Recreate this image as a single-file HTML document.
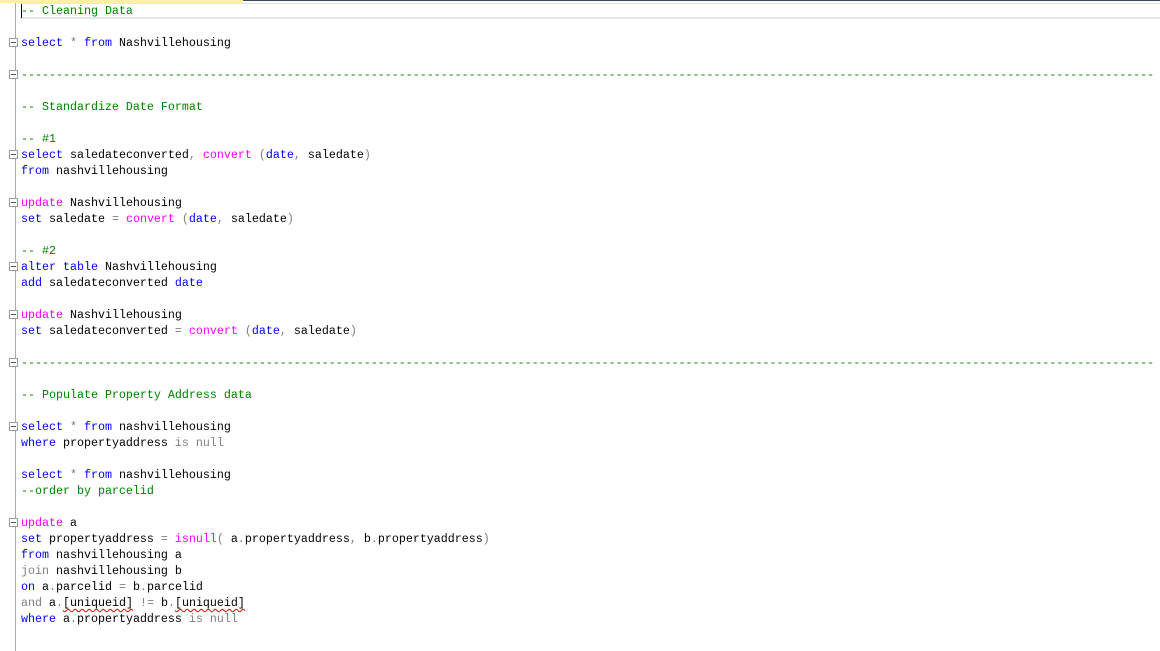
<!DOCTYPE html>
<html><head><meta charset="utf-8"><style>
body{margin:0;width:1160px;height:651px;background:#fff;overflow:hidden;position:relative;font-family:"Liberation Mono",monospace;font-size:11.67px}
.l{position:absolute;left:21px;height:16px;line-height:16px;white-space:pre;color:#000}
.c{color:#008000}.k{color:#0000ff}.p{color:#ff00ff}.g{color:#808080}
.sq{text-decoration:underline wavy #e00;text-decoration-thickness:1px;text-underline-offset:2px}
.box{position:absolute;left:9px;width:7px;height:7px;border:1px solid #999;background:#fff}
.box:after{content:"";position:absolute;left:1px;top:3px;width:5px;height:1px;background:#555}
</style></head><body>
<div style="position:absolute;left:0;top:0;width:243px;height:3px;background:#fff0a0"></div>
<div style="position:absolute;left:243px;top:0;width:917px;height:1px;background:#3a4a60"></div>
<div style="position:absolute;left:20px;top:3px;width:1140px;height:13px;border-bottom:2px solid #e6e6ee;border-top:1px solid #e6e6ee"></div>
<div style="position:absolute;left:21px;top:4px;width:1px;height:14px;background:#000"></div>
<div style="position:absolute;left:15px;top:3px;width:1px;height:648px;background:#aaa"></div>
<div class="box" style="top:38px"></div>
<div class="box" style="top:70px"></div>
<div class="box" style="top:150px"></div>
<div class="box" style="top:198px"></div>
<div class="box" style="top:262px"></div>
<div class="box" style="top:310px"></div>
<div class="box" style="top:358px"></div>
<div class="box" style="top:422px"></div>
<div class="box" style="top:518px"></div>
<div class="l c" style="top:3px">-- Cleaning Data</div>
<div class="l" style="top:35px"><span class="k">select</span> <span class="g">*</span> <span class="k">from</span> Nashvillehousing</div>
<div class="l c" style="top:67px">------------------------------------------------------------------------------------------------------------------------------------------------------------------</div>
<div class="l c" style="top:99px">-- Standardize Date Format</div>
<div class="l c" style="top:131px">-- #1</div>
<div class="l" style="top:147px"><span class="k">select</span> saledateconverted<span class="g">,</span> <span class="p">convert</span> <span class="g">(</span><span class="k">date</span><span class="g">,</span> saledate<span class="g">)</span></div>
<div class="l" style="top:163px"><span class="k">from</span> nashvillehousing</div>
<div class="l" style="top:195px"><span class="p">update</span> Nashvillehousing</div>
<div class="l" style="top:211px"><span class="k">set</span> saledate <span class="g">=</span> <span class="p">convert</span> <span class="g">(</span><span class="k">date</span><span class="g">,</span> saledate<span class="g">)</span></div>
<div class="l c" style="top:243px">-- #2</div>
<div class="l" style="top:259px"><span class="k">alter table</span> Nashvillehousing</div>
<div class="l" style="top:275px"><span class="k">add</span> saledateconverted <span class="k">date</span></div>
<div class="l" style="top:307px"><span class="p">update</span> Nashvillehousing</div>
<div class="l" style="top:323px"><span class="k">set</span> saledateconverted <span class="g">=</span> <span class="p">convert</span> <span class="g">(</span><span class="k">date</span><span class="g">,</span> saledate<span class="g">)</span></div>
<div class="l c" style="top:355px">------------------------------------------------------------------------------------------------------------------------------------------------------------------</div>
<div class="l c" style="top:387px">-- Populate Property Address data</div>
<div class="l" style="top:419px"><span class="k">select</span> <span class="g">*</span> <span class="k">from</span> nashvillehousing</div>
<div class="l" style="top:435px"><span class="k">where</span> propertyaddress <span class="g">is null</span></div>
<div class="l" style="top:467px"><span class="k">select</span> <span class="g">*</span> <span class="k">from</span> nashvillehousing</div>
<div class="l c" style="top:483px">--order by parcelid</div>
<div class="l" style="top:515px"><span class="p">update</span> a</div>
<div class="l" style="top:531px"><span class="k">set</span> propertyaddress <span class="g">=</span> <span class="p">isnull</span><span class="g">(</span> a<span class="g">.</span>propertyaddress<span class="g">,</span> b<span class="g">.</span>propertyaddress<span class="g">)</span></div>
<div class="l" style="top:547px"><span class="k">from</span> nashvillehousing a</div>
<div class="l" style="top:563px"><span class="g">join</span> nashvillehousing b</div>
<div class="l" style="top:579px"><span class="k">on</span> a<span class="g">.</span>parcelid <span class="g">=</span> b<span class="g">.</span>parcelid</div>
<div class="l" style="top:595px"><span class="g">and</span> a<span class="g">.</span><span class="sq">[uniqueid]</span> <span class="g">!=</span> b<span class="g">.</span><span class="sq">[uniqueid]</span></div>
<div class="l" style="top:611px"><span class="k">where</span> a<span class="g">.</span>propertyaddress <span class="g">is null</span></div>
</body></html>
